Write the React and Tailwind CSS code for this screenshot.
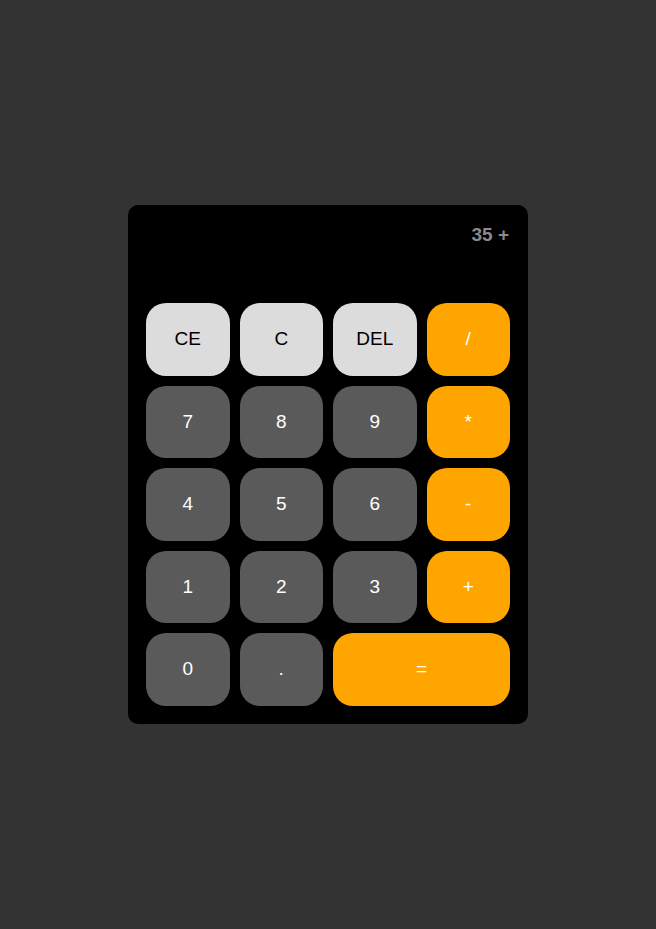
export default function App() {
  const light = "bg-[#dcdcdd] text-black";
  const dark = "bg-[#5a5a5a] text-white";
  const orange = "bg-[#ffa500] text-white";
  const keys = [
    ["CE", light], ["C", light], ["DEL", light], ["/", orange],
    ["7", dark], ["8", dark], ["9", dark], ["*", orange],
    ["4", dark], ["5", dark], ["6", dark], ["-", orange],
    ["1", dark], ["2", dark], ["3", dark], ["+", orange],
    ["0", dark], [".", dark],
  ];
  return (
    <div className="min-h-screen w-full bg-[#333333] flex items-center justify-center" style={{ fontFamily: '"Liberation Sans", Arial, sans-serif' }}>
      <div className="w-[400px] bg-black rounded-[10px] p-[18px]">
        <div className="h-[80px] text-right text-[19px] font-bold text-[#8a8a8a] leading-[22px] pt-[1px] pr-[1px]">35 +</div>
        <div className="grid grid-cols-4 gap-[10px]">
          {keys.map(([k, c]) => (
            <button key={k} className={`${c} h-[72.6px] rounded-[20px] text-[19px] flex items-center justify-center`}>{k}</button>
          ))}
          <button className={`${orange} col-span-2 h-[72.6px] rounded-[20px] text-[19px] flex items-center justify-center`}>=</button>
        </div>
      </div>
    </div>
  );
}
